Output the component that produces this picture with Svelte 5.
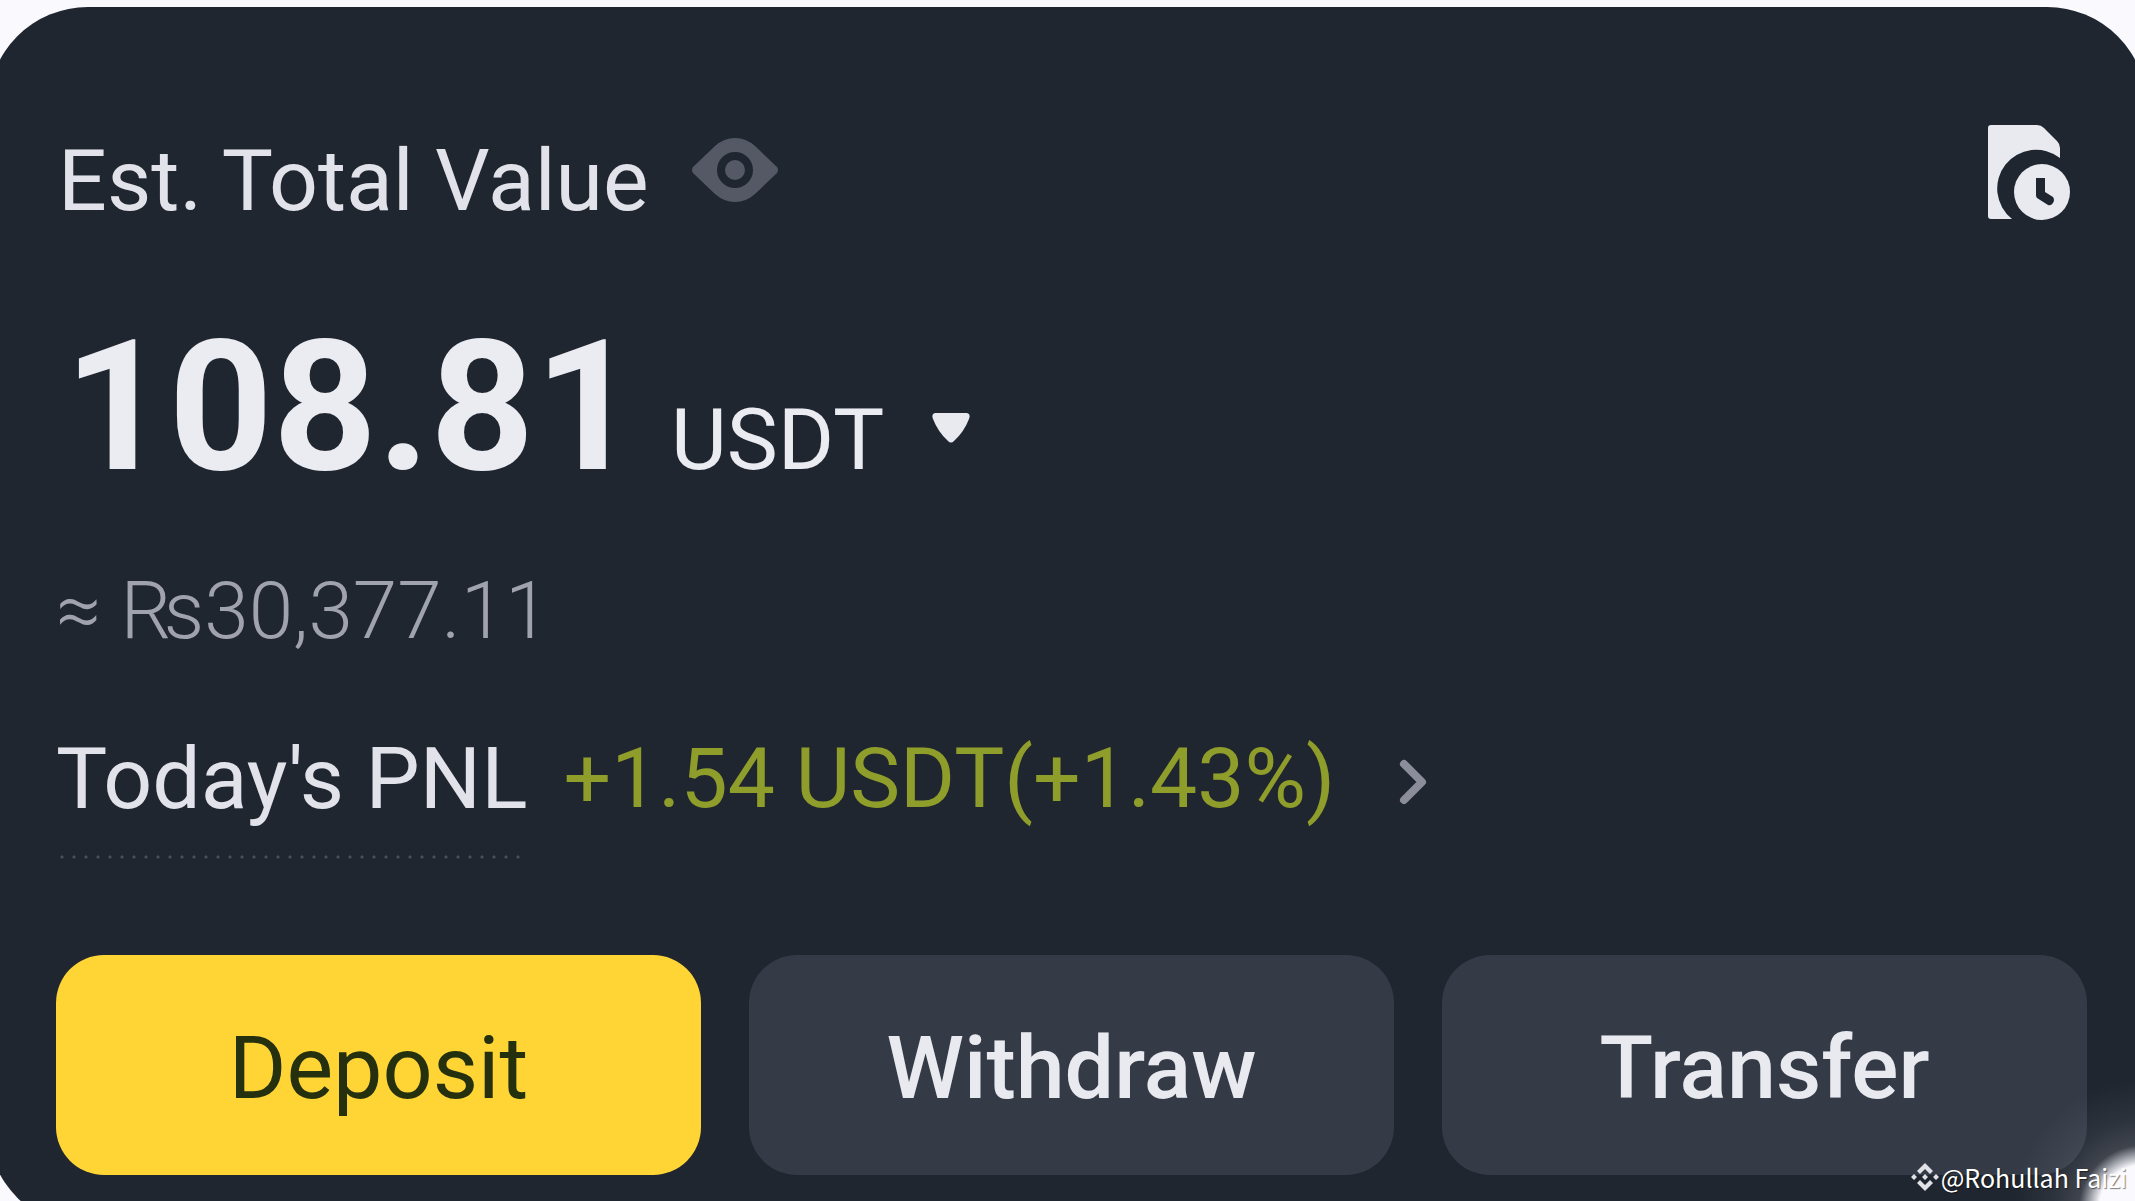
<script lang="ts">
  let hidden = $state(false);

  const balance = {
    total: '108.81',
    currency: 'USDT',
    fiat: '≈ ₨30,377.11',
    pnl: '+1.54 USDT(+1.43%)'
  };

  const actions = [
    { label: 'Deposit', primary: true },
    { label: 'Withdraw', primary: false },
    { label: 'Transfer', primary: false }
  ];

  function mask(value: string) {
    return hidden ? '******' : value;
  }
</script>

<main class="page">
  <section class="card">
    <header class="header">
      <div class="title">
        <h1>Est. Total Value</h1>
        <button class="icon-button eye" aria-label="Toggle balance" onclick={() => (hidden = !hidden)}>
          <svg width="88" height="66" viewBox="0 0 88 66">
            <path
              fill="#555965"
              d="M2 30 L24 9 Q33 1 44 1 Q55 1 64 9 L86 30 Q88 33 86 36 L64 57 Q55 65 44 65 Q33 65 24 57 L2 36 Q0 33 2 30Z"
            />
            <circle cx="44" cy="33" r="14" fill="#555965" stroke="#202630" stroke-width="8" />
          </svg>
        </button>
      </div>
      <button class="icon-button" aria-label="History">
        <svg width="82" height="96" viewBox="0 0 82 96">
          <path
            fill="#e9eaf0"
            d="M3 0 H49 Q53 0 56 3 L69 16 Q72 19 72 23 V33 A37 37 0 0 0 24 94 H3 Q0 94 0 91 V3 Q0 0 3 0Z"
          />
          <circle cx="54" cy="67" r="37" fill="#202630" />
          <circle cx="54" cy="67" r="28" fill="#e9eaf0" />
          <path d="M48 53 H57 V67 L65 72 Q67 75 65 78 Q63 81 60 80 L49 73 Q48 72 48 70Z" fill="#202630" />
        </svg>
      </button>
    </header>

    <div class="balance">
      <strong>{mask(balance.total)}</strong>
      <button class="currency">
        {balance.currency}
        <svg width="38" height="30" viewBox="0 0 38 30" aria-hidden="true">
          <path fill="#e9eaf0" d="M3 0 H35 Q39 1 37 6 Q32 19 22 28 Q19 31 16 28 Q6 19 1 6 Q-1 1 3 0Z" />
        </svg>
      </button>
    </div>

    <p class="fiat">{mask(balance.fiat)}</p>

    <a class="pnl" href="#pnl">
      <span class="pnl-label">Today's PNL</span>
      <span class="pnl-value">{mask(balance.pnl)}</span>
      <svg width="30" height="46" viewBox="0 0 30 46" aria-hidden="true">
        <path d="M5 5 L23 23 L5 41" fill="none" stroke="#8b8e9a" stroke-width="8" stroke-linecap="round" stroke-linejoin="round" />
      </svg>
    </a>

    <div class="actions">
      {#each actions as action}
        <button class="action" class:primary={action.primary}>{action.label}</button>
      {/each}
    </div>
  </section>

  <div class="glow"></div>
  <div class="author">
    <svg width="28" height="28" viewBox="0 0 28 28" aria-hidden="true">
      <path
        fill="#e1e2e6"
        d="M14 0 L22 8 L19 11 L14 6 L9 11 L6 8Z M14 28 L22 20 L19 17 L14 22 L9 17 L6 20Z M14 11 L17 14 L14 17 L11 14Z M3 11 L6 14 L3 17 L0 14Z M25 11 L28 14 L25 17 L22 14Z"
      />
    </svg>
    <span>@Rohullah Faizi</span>
  </div>
</main>

<style>
  :global(body) {
    margin: 0;
    background: #f9f9fe;
  }

  .page {
    position: relative;
    height: 100vh;
    overflow: hidden;
    box-sizing: border-box;
    padding-top: 7px;
    font-family: Roboto, 'Noto Sans', sans-serif;
    color: #e2e3ea;
  }

  .card {
    margin: 0 -12px;
    padding: 118px 60px 52px 68px;
    border-radius: 100px;
    background: #202630;
  }

  button {
    border: none;
    padding: 0;
    background: none;
    color: inherit;
    font-family: inherit;
    cursor: pointer;
  }

  .header,
  .title {
    display: flex;
    align-items: flex-start;
    justify-content: space-between;
  }

  .header {
    padding: 0 17px 0 2px;
  }

  .title {
    gap: 42px;
    padding-top: 2px;
  }

  h1 {
    margin: 0;
    font-size: 86px;
    font-weight: 400;
    line-height: 108px;
  }

  .icon-button svg {
    display: block;
  }

  .eye {
    padding-top: 10px;
  }

  .balance {
    display: flex;
    align-items: baseline;
    gap: 32px;
    margin-top: 76px;
    padding-left: 8px;
    line-height: 192px;
    color: #ebebf2;
  }

  .balance strong {
    font-size: 182px;
    font-weight: 700;
  }

  .currency {
    display: flex;
    align-items: center;
    gap: 48px;
    font-size: 86px;
    line-height: 96px;
  }

  .currency svg {
    margin-bottom: 24px;
  }

  .fiat {
    margin: 60px 0 0;
    font-size: 80px;
    font-weight: 300;
    line-height: 96px;
    color: #a0a2ad;
  }

  .pnl {
    display: flex;
    align-items: flex-start;
    margin-top: 72px;
    font-size: 86px;
    line-height: 96px;
    color: inherit;
    text-decoration: none;
  }

  .pnl-label {
    padding-bottom: 32px;
    background: radial-gradient(circle, #4a4f5b 1px, transparent 2px) left bottom / 12px 4px repeat-x;
  }

  .pnl-value {
    margin-left: 36px;
    font-size: 84px;
    color: #8f9d2b;
  }

  .pnl svg {
    margin: 28px 0 0 64px;
  }

  .actions {
    display: grid;
    grid-template-columns: repeat(3, 1fr);
    gap: 48px;
    margin-top: 96px;
  }

  .action {
    height: 220px;
    padding-top: 4px;
    border-radius: 48px;
    background: #343a46;
    color: #e9eaf0;
    font-size: 88px;
    font-weight: 500;
  }

  .action.primary {
    background: #ffd535;
    color: #25300f;
    font-weight: 400;
  }

  .glow {
    position: absolute;
    right: 0;
    bottom: 0;
    width: 180px;
    height: 130px;
    background: radial-gradient(
      circle at 188px 138px,
      #f9f9fe 44px,
      rgba(249, 249, 254, 0.14) 64px,
      rgba(249, 249, 254, 0.06) 90px,
      transparent 130px
    );
    pointer-events: none;
  }

  .author {
    position: absolute;
    right: 8px;
    bottom: 6px;
    display: flex;
    align-items: center;
    gap: 2px;
    font-family: 'Noto Sans CJK SC', sans-serif;
    font-size: 25px;
    line-height: 36px;
    color: #fff;
    text-shadow: 1px 1px 1px rgba(0, 0, 0, 0.5);
  }
</style>
